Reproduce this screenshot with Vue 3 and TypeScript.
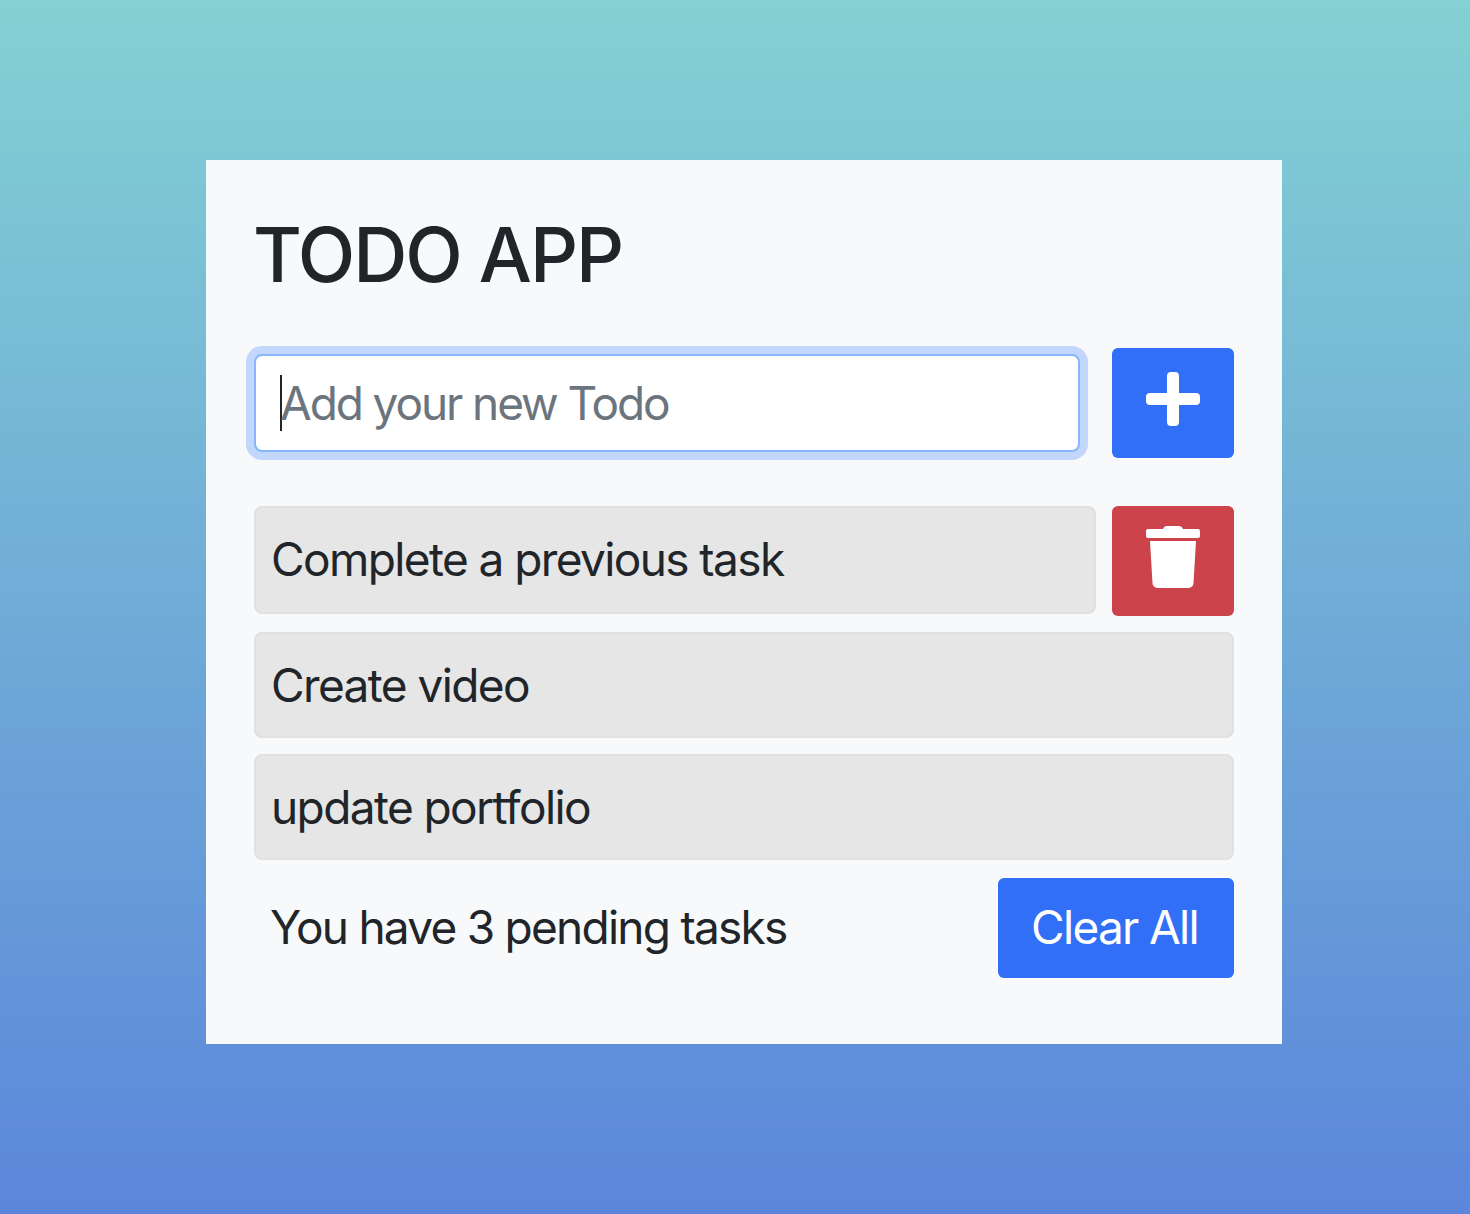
<script setup lang="ts">
const rows = ['Create video', 'update portfolio']
</script>
<template>
  <div class="page">
    <div class="card">
      <h1>TODO APP</h1>
      <div class="add">
        <div class="input"><span class="caret"></span><span class="ph">Add your new Todo</span></div>
        <button class="btn plus" aria-label="add">
          <svg class="ico" width="54" height="54" viewBox="0 0 54 54"><rect x="21" y="0" width="12" height="54" rx="4" fill="#fff"/><rect x="0" y="21" width="54" height="12" rx="4" fill="#fff"/></svg>
        </button>
      </div>
      <div class="first">
        <div class="item grow">Complete a previous task</div>
        <button class="btn trash" aria-label="delete">
          <svg class="ico" width="54" height="62" viewBox="0 0 54 62"><path d="M17 3c1-2 2-3 4-3h12c2 0 3 1 4 3h15a2 2 0 0 1 2 2v5a2 2 0 0 1-2 2H2a2 2 0 0 1-2-2V5a2 2 0 0 1 2-2z" fill="#fff"/><path d="M4 15h46l-2.500 42a5 5 0 0 1-5 5H11.500a5 5 0 0 1-5-5z" fill="#fff"/></svg>
        </button>
      </div>
      <div v-for="r in rows" :key="r" class="item">{{ r }}</div>
      <div class="footer">
        <span class="count">You have 3 pending tasks</span>
        <button class="btn clear">Clear All</button>
      </div>
    </div>
  </div>
</template>
<style>
html, body { margin: 0; }
</style>
<style scoped>
.page { height: 1214px; background: linear-gradient(to bottom, #83d1d3, #5c86db); padding-top: 160px; box-sizing: border-box; font-family: Inter, "Liberation Sans", sans-serif; color: #212529; }
.card { width: 1076px; height: 884px; margin-left: 206px; background: #f8f9fa; box-sizing: border-box; padding: 48px; }
h1 { margin: 0 0 46px -1px; font-size: 75px; line-height: 94px; font-weight: 500; letter-spacing: -2px; }
.add { display: flex; gap: 32px; height: 110px; margin-bottom: 48px; }
.input { flex: 1; margin: 6px 0; border: 2px solid #86b7fe; border-radius: 8px; background: #fff; box-shadow: 0 0 0 8px #c2d7fb; display: flex; align-items: center; padding-left: 24px; font-size: 46px; letter-spacing: -2.1px; color: #6c757d; }
.ph { margin-left: -2px; }
.caret { width: 2px; height: 56px; background: #212529; }
.btn { border: 0; border-radius: 6px; color: #fff; display: flex; align-items: center; justify-content: center; padding: 0; }
.ico { margin-bottom: 8px; }
.plus, .trash { width: 122px; height: 110px; background: #316ff6; }
.trash { background: #cd434c; }
.first { display: flex; gap: 16px; margin-bottom: 16px; }
.grow { flex: 1; margin-bottom: 0 !important; height: 108px !important; padding-bottom: 2px; }
.item { height: 106px; box-sizing: border-box; background: #e6e6e6; border: 2px solid #e0e0e0; border-radius: 8px; font-size: 46px; letter-spacing: -1.6px; display: flex; align-items: center; padding-left: 15px; margin-bottom: 16px; }
.footer { display: flex; justify-content: space-between; align-items: center; height: 100px; padding-left: 16px; margin-top: 18px; font-size: 46px; letter-spacing: -1.75px; }
.count { padding-bottom: 2px; }
.clear { width: 236px; height: 100px; background: #316ff6; font: inherit; letter-spacing: -1.7px; padding: 0 3px 2px 0; }
</style>
